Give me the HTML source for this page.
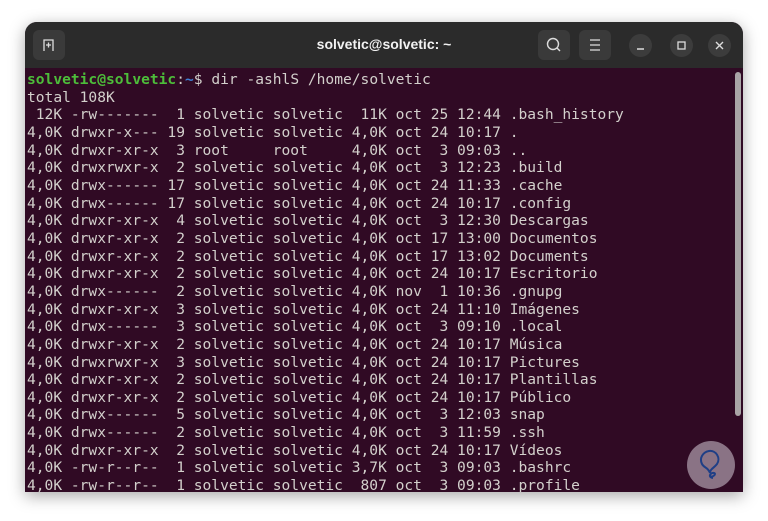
<!DOCTYPE html>
<html><head><meta charset="utf-8"><style>
html,body{margin:0;padding:0;width:768px;height:521px;background:#fff;overflow:hidden}
.win{position:absolute;left:25px;top:22px;width:718px;height:470px;border-radius:12px 12px 0 0;overflow:hidden;box-shadow:0 4px 16px rgba(0,0,0,.35);background:#300a24}
.tb{position:absolute;left:0;top:0;width:718px;height:46px;background:#2b2b2b}
.btn{position:absolute;top:8px;width:32px;height:30px;border-radius:6px;background:#3a3a3a}
.cb{position:absolute;top:12px;width:23px;height:23px;border-radius:50%;background:#3c3c3c}
.title{position:absolute;left:0;width:718px;top:14px;text-align:center;color:#f2f2f2;font:bold 14px "Liberation Sans",sans-serif}
pre{position:absolute;left:2px;top:49px;margin:0;font-family:"DejaVu Sans Mono",monospace;font-size:14.58px;line-height:17.65px;color:#d3d0cc;white-space:pre}
.g{color:#4dbd3a;font-weight:bold}.b{color:#3e7fd4;font-weight:bold}
.sb{position:absolute;left:710px;top:50px;width:6px;height:344px;border-radius:3px;background:#a9a4a6}
</style></head><body>
<div class="win">
<div class="tb">
<div class="btn" style="left:8px"><svg width="32" height="30"><path d="M11 21V10h9v11M13 15h5M15.5 12.5v5" stroke="#ddd" stroke-width="1.3" fill="none"/></svg></div>
<div class="title">solvetic@solvetic: ~</div>
<div class="btn" style="left:513px"><svg width="32" height="30"><circle cx="15" cy="14" r="5.5" stroke="#ddd" stroke-width="1.4" fill="none"/><path d="M19 18l3 3" stroke="#ddd" stroke-width="1.4"/></svg></div>
<div class="btn" style="left:554px"><svg width="32" height="30"><path d="M11 10h10M11 15h10M11 20h10" stroke="#ddd" stroke-width="1.3"/></svg></div>
<div class="cb" style="left:604px"><svg width="23" height="23"><path d="M8 15h7" stroke="#ddd" stroke-width="1.4"/></svg></div>
<div class="cb" style="left:645px"><svg width="23" height="23"><rect x="8" y="8" width="7" height="7" stroke="#ddd" stroke-width="1.3" fill="none"/></svg></div>
<div class="cb" style="left:683px"><svg width="23" height="23"><path d="M8 8l7 7M15 8l-7 7" stroke="#ddd" stroke-width="1.4"/></svg></div>
</div>
<pre><span class="g">solvetic@solvetic</span>:<span class="b">~</span>$ dir -ashlS /home/solvetic
total 108K
 12K -rw-------  1 solvetic solvetic  11K oct 25 12:44 .bash_history
4,0K drwxr-x--- 19 solvetic solvetic 4,0K oct 24 10:17 .
4,0K drwxr-xr-x  3 root     root     4,0K oct  3 09:03 ..
4,0K drwxrwxr-x  2 solvetic solvetic 4,0K oct  3 12:23 .build
4,0K drwx------ 17 solvetic solvetic 4,0K oct 24 11:33 .cache
4,0K drwx------ 17 solvetic solvetic 4,0K oct 24 10:17 .config
4,0K drwxr-xr-x  4 solvetic solvetic 4,0K oct  3 12:30 Descargas
4,0K drwxr-xr-x  2 solvetic solvetic 4,0K oct 17 13:00 Documentos
4,0K drwxr-xr-x  2 solvetic solvetic 4,0K oct 17 13:02 Documents
4,0K drwxr-xr-x  2 solvetic solvetic 4,0K oct 24 10:17 Escritorio
4,0K drwx------  2 solvetic solvetic 4,0K nov  1 10:36 .gnupg
4,0K drwxr-xr-x  3 solvetic solvetic 4,0K oct 24 11:10 Imágenes
4,0K drwx------  3 solvetic solvetic 4,0K oct  3 09:10 .local
4,0K drwxr-xr-x  2 solvetic solvetic 4,0K oct 24 10:17 Música
4,0K drwxrwxr-x  3 solvetic solvetic 4,0K oct 24 10:17 Pictures
4,0K drwxr-xr-x  2 solvetic solvetic 4,0K oct 24 10:17 Plantillas
4,0K drwxr-xr-x  2 solvetic solvetic 4,0K oct 24 10:17 Público
4,0K drwx------  5 solvetic solvetic 4,0K oct  3 12:03 snap
4,0K drwx------  2 solvetic solvetic 4,0K oct  3 11:59 .ssh
4,0K drwxr-xr-x  2 solvetic solvetic 4,0K oct 24 10:17 Vídeos
4,0K -rw-r--r--  1 solvetic solvetic 3,7K oct  3 09:03 .bashrc
4,0K -rw-r--r--  1 solvetic solvetic  807 oct  3 09:03 .profile</pre>
<div class="sb"></div>
</div>
<svg style="position:absolute;left:686px;top:440px" width="50" height="50"><circle cx="25" cy="25" r="24" fill="#8a7385"/><path d="M27 38c-6-1-2-6 1-5 3 1-2 5-4 3M24 33c0-4 4-5 7-9 4-6-1-14-8-13-6 1-10 7-7 13 2 4 6 3 8 9" stroke="#1f3f86" stroke-width="2" fill="none"/></svg>
</body></html>
